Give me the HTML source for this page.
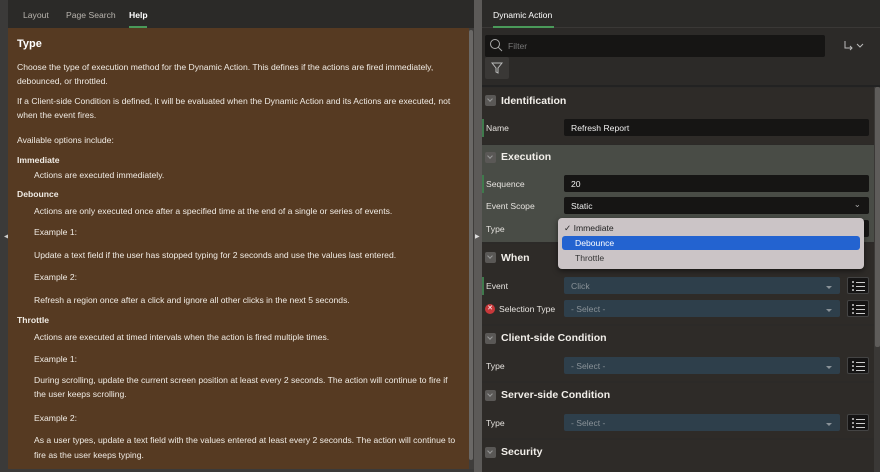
<!DOCTYPE html>
<html><head><style>
*{margin:0;padding:0;box-sizing:border-box}
body{width:880px;height:472px;overflow:hidden;background:#2c2a28;font-family:"Liberation Sans",sans-serif;position:relative;color:#e8e4df}
.a{position:absolute;white-space:nowrap}
.t{font-size:8.6px;color:#f0ebe4;line-height:11px}
.b{font-weight:bold}
.lbl{font-size:8.6px;color:#e6e3df}
.hdr{font-size:10.5px;font-weight:bold;color:#f2efea}
.chev{position:absolute;width:11px;height:11px;background:#5a5856;border-radius:2px}
.chev:after{content:"";position:absolute;left:3px;top:2px;width:3px;height:3px;border-right:1px solid #999;border-bottom:1px solid #999;transform:rotate(45deg)}
.inp{position:absolute;background:#161514;border-radius:2px;height:17px;font-size:8.6px;color:#eee;padding:4px 7px}
.sel{position:absolute;background:#2e3f4b;border-radius:2px;height:17px;font-size:8.6px;color:#8a9298;padding:4px 7px}
.sel:after{content:"";position:absolute;right:8px;top:9px;border:3px solid transparent;border-top:3px solid #8a9298}
.lb{position:absolute;width:22px;height:17px;background:#151414;border:1px solid #444;border-radius:2px}
.lb i{position:absolute;left:8px;width:9px;height:1px;background:#ccc}
.lb i:before{content:"";position:absolute;left:-4px;top:-1px;width:2px;height:2px;background:#ccc;border-radius:1px}
.sec{position:absolute;left:482px;width:392px}
</style></head><body>
<div class="a" style="left:0;top:0;width:8px;height:472px;background:#3b3a39"></div>
<div class="a" style="left:4px;top:233px;font-size:6px;color:#ccc">◀</div>
<div class="a" style="left:8px;top:0;width:466px;height:28px;background:#2b2a28"></div>
<div class="a t" style="left:23px;top:10px;color:#b8b4ae">Layout</div>
<div class="a t" style="left:66px;top:10px;color:#b8b4ae">Page Search</div>
<div class="a t b" style="left:129px;top:10px;color:#fff">Help</div>
<div class="a" style="left:129px;top:26px;width:18px;height:2px;background:#4a9a5a"></div>
<div class="a" style="left:8px;top:28px;width:461px;height:442px;background:#563a22"></div>
<div class="a" style="left:469px;top:28px;width:5px;height:442px;background:#3f3d3b"></div>
<div class="a" style="left:469px;top:30px;width:4px;height:430px;background:#6a6866;border-radius:2px"></div>
<div class="a" style="left:474px;top:0;width:8px;height:472px;background:#5c5a58"></div>
<div class="a" style="left:475px;top:233px;font-size:6px;color:#ddd">▶</div>
<div class="a" style="left:0;top:469px;width:474px;height:3px;background:#3b3a39"></div>

<div class="a b" style="left:17px;top:38px;font-size:11px;color:#fff">Type</div>
<div class="a t" style="left:17px;top:62px">Choose the type of execution method for the Dynamic Action. This defines if the actions are fired immediately,</div>
<div class="a t" style="left:17px;top:76px">debounced, or throttled.</div>
<div class="a t" style="left:17px;top:96px">If a Client-side Condition is defined, it will be evaluated when the Dynamic Action and its Actions are executed, not</div>
<div class="a t" style="left:17px;top:110px">when the event fires.</div>
<div class="a t" style="left:17px;top:135px">Available options include:</div>
<div class="a t b" style="left:17px;top:155px">Immediate</div>
<div class="a t" style="left:34px;top:170px">Actions are executed immediately.</div>
<div class="a t b" style="left:17px;top:189px">Debounce</div>
<div class="a t" style="left:34px;top:206px">Actions are only executed once after a specified time at the end of a single or series of events.</div>
<div class="a t" style="left:34px;top:227px">Example 1:</div>
<div class="a t" style="left:34px;top:250px">Update a text field if the user has stopped typing for 2 seconds and use the values last entered.</div>
<div class="a t" style="left:34px;top:272px">Example 2:</div>
<div class="a t" style="left:34px;top:295px">Refresh a region once after a click and ignore all other clicks in the next 5 seconds.</div>
<div class="a t b" style="left:17px;top:315px">Throttle</div>
<div class="a t" style="left:34px;top:332px">Actions are executed at timed intervals when the action is fired multiple times.</div>
<div class="a t" style="left:34px;top:354px">Example 1:</div>
<div class="a t" style="left:34px;top:375px">During scrolling, update the current screen position at least every 2 seconds. The action will continue to fire if</div>
<div class="a t" style="left:34px;top:389px">the user keeps scrolling.</div>
<div class="a t" style="left:34px;top:413px">Example 2:</div>
<div class="a t" style="left:34px;top:435px">As a user types, update a text field with the values entered at least every 2 seconds. The action will continue to</div>
<div class="a t" style="left:34px;top:450px">fire as the user keeps typing.</div>

<div class="a" style="left:482px;top:0;width:398px;height:28px;background:#2b2a28;border-bottom:1px solid #3a3836"></div>
<div class="a t" style="left:493px;top:10px;color:#fff">Dynamic Action</div>
<div class="a" style="left:493px;top:26px;width:61px;height:2px;background:#4a9a5a"></div>
<div class="a" style="left:485px;top:35px;width:340px;height:22px;background:#161514;border-radius:2px"></div>
<svg class="a" style="left:489px;top:38px" width="14" height="14"><circle cx="6" cy="6" r="4.5" stroke="#aaa" fill="none"/><line x1="9.3" y1="9.3" x2="13" y2="13" stroke="#aaa"/></svg>
<div class="a t" style="left:508px;top:41px;color:#777">Filter</div>
<svg class="a" style="left:843px;top:39px" width="24" height="14"><path d="M2 2V9H9M7 7L9 9L7 11" fill="none" stroke="#bbb"/><path d="M14 5L17 8L20 5" fill="none" stroke="#bbb"/></svg>
<div class="a" style="left:485px;top:57px;width:24px;height:22px;background:#3a3836;border-radius:2px"></div>
<svg class="a" style="left:491px;top:62px" width="12" height="12"><path d="M1 1H11L7 6V11L5 10V6Z" fill="none" stroke="#bbb"/></svg>
<div class="a" style="left:482px;top:85px;width:398px;height:2px;background:#222"></div>
<div class="a" style="left:874px;top:87px;width:6px;height:385px;background:#3a3836"></div>
<div class="a" style="left:875px;top:87px;width:5px;height:260px;background:#5e5c5a;border-radius:2px"></div>

<div class="sec" style="top:88px;height:56px;background:#2e2b28"></div>
<div class="chev" style="left:485px;top:95px"></div><div class="a hdr" style="left:501px;top:95px">Identification</div>
<div class="a" style="left:482px;top:119px;width:2px;height:18px;background:#3f7a4c"></div>
<div class="a lbl" style="left:486px;top:123px">Name</div>
<div class="inp" style="left:564px;top:119px;width:305px">Refresh Report</div>
<div class="sec" style="top:145px;height:97px;background:#494c46"></div>
<div class="chev" style="left:485px;top:152px"></div><div class="a hdr" style="left:501px;top:151px">Execution</div>
<div class="a" style="left:482px;top:175px;width:2px;height:18px;background:#3f7a4c"></div>
<div class="a lbl" style="left:486px;top:179px">Sequence</div>
<div class="inp" style="left:564px;top:175px;width:305px">20</div>
<div class="a lbl" style="left:486px;top:201px">Event Scope</div>
<div class="inp" style="left:564px;top:197px;width:305px">Static<span style="position:absolute;right:8px;top:2px;color:#aaa">⌄</span></div>
<div class="a lbl" style="left:486px;top:224px">Type</div>
<div class="inp" style="left:564px;top:220px;width:305px"></div>
<div class="sec" style="top:244px;height:80px;background:#2e2b28"></div>
<div class="chev" style="left:485px;top:252px"></div><div class="a hdr" style="left:501px;top:252px">When</div>
<div class="a" style="left:482px;top:277px;width:2px;height:18px;background:#3f7a4c"></div>
<div class="a lbl" style="left:486px;top:281px">Event</div>
<div class="sel" style="left:564px;top:277px;width:276px">Click</div>
<div class="lb" style="left:847px;top:277px"><i style="top:4px"></i><i style="top:8px"></i><i style="top:12px"></i></div>
<div class="a" style="left:485px;top:304px;width:10px;height:10px;border-radius:5px;background:#c8383a;color:#fff;font-size:7px;text-align:center;line-height:10px">✕</div>
<div class="a lbl" style="left:499px;top:304px">Selection Type</div>
<div class="sel" style="left:564px;top:300px;width:276px">- Select -</div>
<div class="lb" style="left:847px;top:300px"><i style="top:4px"></i><i style="top:8px"></i><i style="top:12px"></i></div>
<div class="sec" style="top:326px;height:55px;background:#2e2b28"></div>
<div class="chev" style="left:485px;top:333px"></div><div class="a hdr" style="left:501px;top:332px">Client-side Condition</div>
<div class="a lbl" style="left:486px;top:361px">Type</div>
<div class="sel" style="left:564px;top:357px;width:276px">- Select -</div>
<div class="lb" style="left:847px;top:357px"><i style="top:4px"></i><i style="top:8px"></i><i style="top:12px"></i></div>
<div class="sec" style="top:383px;height:55px;background:#2e2b28"></div>
<div class="chev" style="left:485px;top:390px"></div><div class="a hdr" style="left:501px;top:389px">Server-side Condition</div>
<div class="a lbl" style="left:486px;top:418px">Type</div>
<div class="sel" style="left:564px;top:414px;width:276px">- Select -</div>
<div class="lb" style="left:847px;top:414px"><i style="top:4px"></i><i style="top:8px"></i><i style="top:12px"></i></div>
<div class="sec" style="top:440px;height:32px;background:#2e2b28"></div>
<div class="chev" style="left:485px;top:447px"></div><div class="a hdr" style="left:501px;top:446px">Security</div>

<div class="a" style="left:558px;top:218px;width:306px;height:51px;background:#cbc4c6;border-radius:4px;box-shadow:0 2px 6px rgba(0,0,0,.5)"></div>
<div class="a" style="left:562px;top:236px;width:298px;height:14px;background:#2363d0;border-radius:3px"></div>
<div class="a" style="left:564px;top:223px;font-size:8.6px;color:#222">✓ Immediate</div>
<div class="a" style="left:575px;top:238px;font-size:8.6px;color:#fff">Debounce</div>
<div class="a" style="left:575px;top:253px;font-size:8.6px;color:#333">Throttle</div>
</body></html>
